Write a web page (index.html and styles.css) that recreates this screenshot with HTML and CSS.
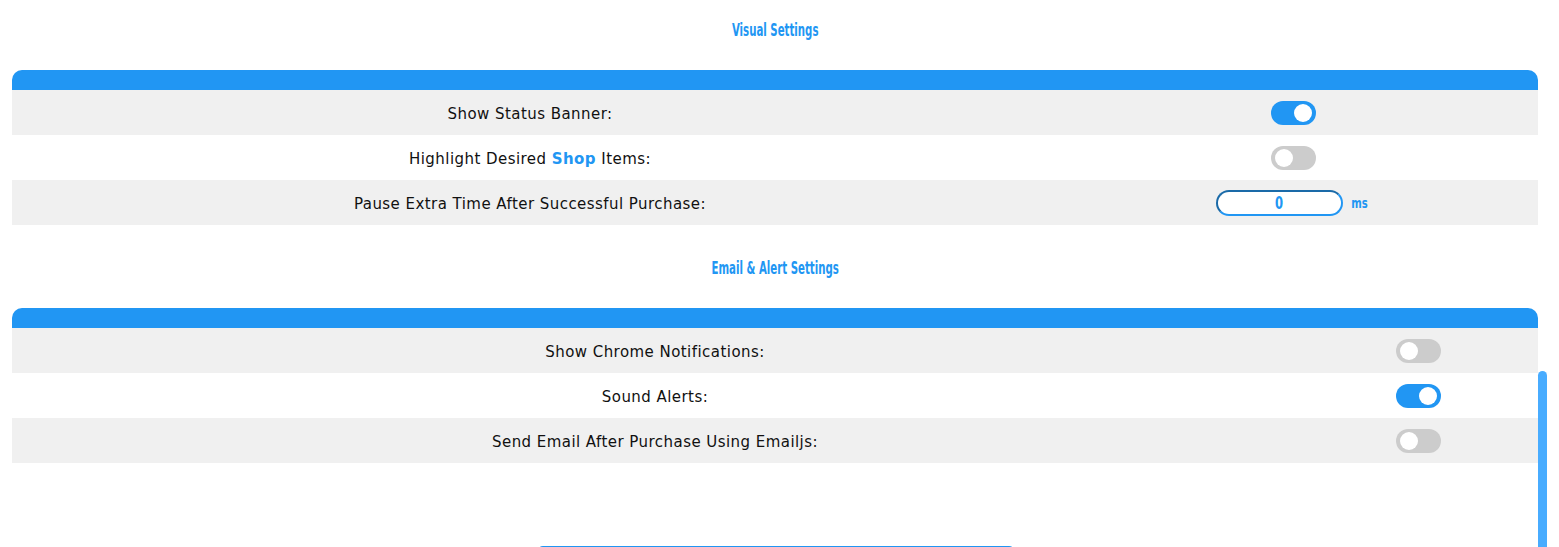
FILE: index.html
```html
<!DOCTYPE html>
<html>
<head>
<meta charset="utf-8">
<link rel="stylesheet" href="styles.css">
</head>
<body>
<main class="page">
  <h3 class="section-title first"><span class="narrow">Visual Settings</span></h3>
  <section class="panel visual">
    <div class="panel-head"></div>
    <div class="row">
      <div class="label">Show Status Banner:</div>
      <div class="control"><span class="toggle on"><span class="knob"></span></span></div>
    </div>
    <div class="row">
      <div class="label">Highlight Desired <span class="accent">Shop</span> Items:</div>
      <div class="control"><span class="toggle"><span class="knob"></span></span></div>
    </div>
    <div class="row">
      <div class="label">Pause Extra Time After Successful Purchase:</div>
      <div class="control"><span class="num-input"><span class="narrow">0</span></span><span class="unit"><span class="narrow">ms</span></span></div>
    </div>
  </section>

  <h3 class="section-title"><span class="narrow">Email &amp; Alert Settings</span></h3>
  <section class="panel alerts">
    <div class="panel-head"></div>
    <div class="row">
      <div class="label">Show Chrome Notifications:</div>
      <div class="control"><span class="toggle"><span class="knob"></span></span></div>
    </div>
    <div class="row">
      <div class="label">Sound Alerts:</div>
      <div class="control"><span class="toggle on"><span class="knob"></span></span></div>
    </div>
    <div class="row">
      <div class="label">Send Email After Purchase Using Emailjs:</div>
      <div class="control"><span class="toggle"><span class="knob"></span></span></div>
    </div>
  </section>

  <div class="actions"><div class="save-btn"></div></div>
</main>
<div class="scrollbar"></div>
</body>
</html>
```

FILE: styles.css
```css
html, body {
  margin: 0;
  padding: 0;
  height: 547px;
  overflow: hidden;
  background: #ffffff;
}
body {
  position: relative;
  font-family: "DejaVu Sans", sans-serif;
}
.page {
  padding: 0 21px 0 12px;
}
.narrow {
  display: inline-block;
  transform: scaleX(0.78);
}
.section-title {
  margin: 33px 0 30px;
  height: 20px;
  line-height: 20px;
  text-align: center;
  font-family: "DejaVu Sans", sans-serif;
  font-weight: bold;
  font-size: 17px;
  color: #2196f3;
}
.section-title .narrow {
  transform: scaleX(0.6);
}
.section-title.first {
  margin-top: 20px;
}
.panel-head {
  height: 20px;
  background: #2196f3;
  border-radius: 10px 10px 0 0;
}
.row {
  display: grid;
  height: 45px;
  align-items: center;
}
.visual .row { grid-template-columns: 1036px 1fr; }
.alerts .row { grid-template-columns: 1286px 1fr; }
.row:nth-child(even) { background: #f0f0f0; }
.row:nth-child(odd) { background: #ffffff; }
.label {
  text-align: center;
  font-size: 15px;
  color: #111;
  letter-spacing: 0.45px;
  padding-top: 2px;
}
.accent {
  color: #2196f3;
  font-weight: bold;
}
.control {
  display: flex;
  justify-content: center;
  align-items: center;
}
.toggle {
  display: block;
  position: relative;
  width: 45px;
  height: 24px;
  border-radius: 12px;
  background: #cccccc;
}
.toggle.on { background: #2196f3; }
.knob {
  position: absolute;
  top: 3px;
  left: 4px;
  width: 18px;
  height: 18px;
  border-radius: 50%;
  background: #ffffff;
}
.toggle.on .knob { left: 23px; }
.num-input {
  box-sizing: border-box;
  width: 127px;
  height: 26px;
  border: 2px solid #2196f3;
  border-top-color: #1a6aa8;
  border-left-color: #1a6aa8;
  border-radius: 13px;
  background: #fff;
  text-align: center;
  line-height: 22px;
  font-weight: bold;
  font-size: 17px;
  color: #2196f3;
}
.num-input .narrow { transform: scaleX(0.68); }
.unit {
  margin-left: 5px;
  font-weight: bold;
  font-size: 14px;
  color: #2196f3;
}
.unit .narrow { transform: scaleX(0.72); }
.actions {
  display: flex;
  justify-content: center;
  padding-top: 83px;
}
.save-btn {
  box-sizing: border-box;
  width: 478px;
  height: 40px;
  margin-left: 1px;
  border: 2px solid #2196f3;
  border-radius: 6px;
  background: #fff;
}
.scrollbar {
  position: absolute;
  left: 1538px;
  top: 371px;
  width: 9px;
  height: 200px;
  border-radius: 5px;
  background: #48acff;
}
```
